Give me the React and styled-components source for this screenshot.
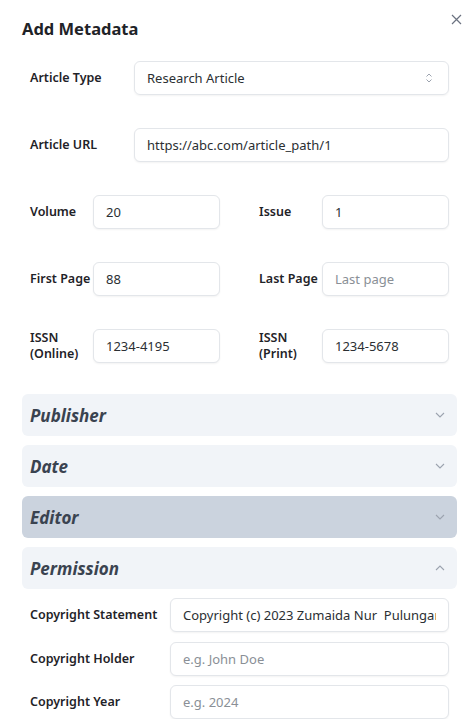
import React from "react";
import styled, { createGlobalStyle } from "styled-components";

const GlobalStyle = createGlobalStyle`
  body {
    margin: 0;
    background: #ffffff;
    font-family: "Noto Sans", "Open Sans", sans-serif;
    color: #1f2328;
  }
`;

const App = () => {
  return (
    <>
      <GlobalStyle />
      <Panel>
        <Header>
          <Title>Add Metadata</Title>
          <CloseButton aria-label="close">
            <svg width="11" height="11" viewBox="0 0 11 11">
              <path d="M1 1 L10 10 M10 1 L1 10" stroke="#6b7280" strokeWidth="1.2" fill="none" />
            </svg>
          </CloseButton>
        </Header>

        <Fields>
          <WideRow>
            <Label>Article Type</Label>
            <SelectBox>
              <span>Research Article</span>
              <svg width="8" height="12" viewBox="0 0 8 12">
                <path d="M1.5 4.5 L4 2 L6.5 4.5 M1.5 7.5 L4 10 L6.5 7.5" stroke="#9ca3af" strokeWidth="1" fill="none" />
              </svg>
            </SelectBox>
          </WideRow>
          <WideRow>
            <Label>Article URL</Label>
            <Input defaultValue="https://abc.com/article_path/1" />
          </WideRow>
          <PairRow>
            <Half>
              <Label>Volume</Label>
              <Input defaultValue="20" />
            </Half>
            <Half>
              <Label>Issue</Label>
              <Input defaultValue="1" />
            </Half>
          </PairRow>
          <PairRow>
            <Half>
              <Label>First Page</Label>
              <Input defaultValue="88" />
            </Half>
            <Half>
              <Label>Last Page</Label>
              <Input placeholder="Last page" />
            </Half>
          </PairRow>
          <PairRow>
            <Half>
              <Label>
                <Line>ISSN</Line>
                <Line>(Online)</Line>
              </Label>
              <Input defaultValue="1234-4195" />
            </Half>
            <Half>
              <Label>
                <Line>ISSN</Line>
                <Line>(Print)</Line>
              </Label>
              <Input defaultValue="1234-5678" />
            </Half>
          </PairRow>
        </Fields>

        <Sections>
          <Section title="Publisher" />
          <Section title="Date" />
          <Section title="Editor" active />
          <Section title="Permission" open>
            <SectionBody>
              <PermRow>
                <Label>Copyright Statement</Label>
                <Input defaultValue="Copyright (c) 2023 Zumaida Nur  Pulungan" />
              </PermRow>
              <PermRow>
                <Label>Copyright Holder</Label>
                <Input placeholder="e.g. John Doe" />
              </PermRow>
              <PermRow>
                <Label>Copyright Year</Label>
                <Input placeholder="e.g. 2024" />
              </PermRow>
            </SectionBody>
          </Section>
        </Sections>
      </Panel>
    </>
  );
};

const Section = ({ title, active, open, children }) => (
  <div>
    <SectionHead $active={active}>
      <SectionTitle>{title}</SectionTitle>
      <svg width="10" height="6" viewBox="0 0 10 6">
        <path
          d={open ? "M1 5 L5 1 L9 5" : "M1 1 L5 5 L9 1"}
          stroke="#9ca3af"
          strokeWidth="1.1"
          fill="none"
        />
      </svg>
    </SectionHead>
    {open && children}
  </div>
);

const Panel = styled.div`
  width: 474px;
  height: 719px;
  overflow: hidden;
  padding: 15px 17px 0 22px;
  box-sizing: border-box;
`;

const Header = styled.div`
  display: flex;
  justify-content: space-between;
  align-items: flex-start;
`;

const Title = styled.h1`
  margin: 0;
  font-size: 16.5px;
  line-height: 28px;
  font-weight: 700;
  color: #1f2328;
`;

const CloseButton = styled.button`
  border: none;
  background: none;
  padding: 0;
  margin-top: -1px;
  margin-right: -5px;
  cursor: pointer;
  display: flex;
`;

const Fields = styled.div`
  display: flex;
  flex-direction: column;
  gap: 33px;
  padding: 0 8px;
  margin-top: 18px;
`;

const WideRow = styled.div`
  display: grid;
  grid-template-columns: 104px 1fr;
  align-items: center;
`;

const PairRow = styled.div`
  display: grid;
  grid-template-columns: 1fr 1fr;
  column-gap: 39px;
`;

const Half = styled.div`
  display: grid;
  grid-template-columns: 63px 1fr;
  align-items: center;
`;

const Label = styled.label`
  font-size: 12.5px;
  font-weight: 600;
  color: #1f2328;
  line-height: 18px;
  white-space: nowrap;
  display: flex;
  flex-direction: column;
`;

const Line = styled.span`
  line-height: 16px;
`;

const Input = styled.input`
  height: 34px;
  box-sizing: border-box;
  width: 100%;
  min-width: 0;
  border: 1px solid #e3e6ea;
  border-radius: 6px;
  box-shadow: 0 1px 2px rgba(0, 0, 0, 0.05);
  padding: 0 12px;
  font-family: "Noto Sans", "Open Sans", sans-serif;
  font-size: 13px;
  color: #2b2f33;
  background: #fff;
  outline: none;
  &::placeholder {
    color: #8a8f96;
  }
`;

const SelectBox = styled.div`
  height: 34px;
  box-sizing: border-box;
  border: 1px solid #e3e6ea;
  border-radius: 6px;
  box-shadow: 0 1px 2px rgba(0, 0, 0, 0.05);
  padding: 0 15px 0 12px;
  display: flex;
  align-items: center;
  justify-content: space-between;
  font-size: 13px;
  color: #2b2f33;
`;

const Sections = styled.div`
  display: flex;
  flex-direction: column;
  gap: 9px;
  margin-top: 31px;
`;

const SectionHead = styled.div`
  height: 42px;
  border-radius: 6px;
  background: ${(p) => (p.$active ? "#cbd3de" : "#f1f4f8")};
  display: flex;
  align-items: center;
  justify-content: space-between;
  padding: 0 12px 0 8px;
`;

const SectionTitle = styled.span`
  font-size: 17px;
  font-weight: 700;
  font-style: italic;
  color: #3a4350;
`;

const SectionBody = styled.div`
  display: flex;
  flex-direction: column;
  gap: 9.5px;
  padding: 9px 8px 0;
`;

const PermRow = styled.div`
  display: grid;
  grid-template-columns: 140px 1fr;
  align-items: center;
`;

export default App;
